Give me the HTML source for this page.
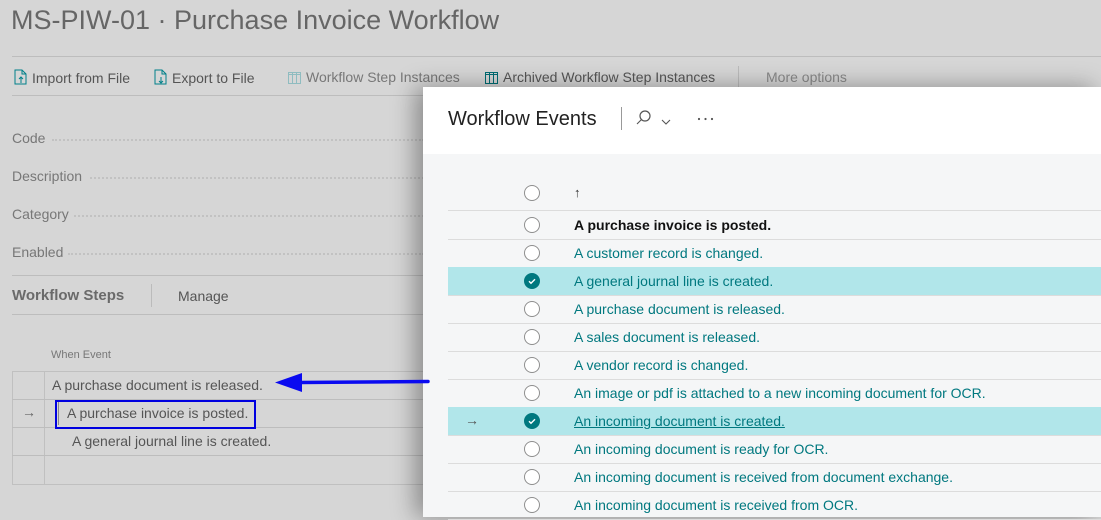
<!DOCTYPE html>
<html><head><style>
body{margin:0;width:1101px;height:517px;overflow:hidden;background:#d6d6d6;font-family:"Liberation Sans",sans-serif;position:relative;color:#5f5f5f}
.a{position:absolute;white-space:nowrap}
.hl{position:absolute;height:1px;background:#bdbdbd}
.dots{position:absolute;height:0;border-top:2px dotted #c2c2c2}
.ic{display:inline-block;vertical-align:-2px;margin-right:5px}
#dlg{position:absolute;left:423px;top:87px;width:678px;height:430px;background:#f5f6f7;box-shadow:-8px 0 22px rgba(0,0,0,.35)}
#dh{position:absolute;left:0;top:0;width:678px;height:67px;background:#fff}
.row{position:absolute;left:25px;width:653px;height:28px;border-bottom:1px solid #dcdcdc}
.row.sel{background:#b1e6ea}
.c{position:absolute;left:76px;top:6px;width:14px;height:14px;border:1.3px solid #8f8f8f;border-radius:50%;background:#fff}
.c.k{background:#00787f;border-color:#00787f}
.t{position:absolute;left:126px;top:6px;font-size:14px;color:#00787f}
</style></head><body>
<div class="a" style="left:11px;top:5px;font-size:27px;color:#666">MS-PIW-01 · Purchase Invoice Workflow</div>
<div class="hl" style="left:12px;top:56px;width:1089px"></div>
<div class="a" style="left:14px;top:69px;font-size:14px;color:#555">
<svg class="ic" width="13" height="16"><path d="M1 1h7l4 4v10H1z M8 1v4h4" fill="none" stroke="#008089"/><path d="M7 14V8M5 10l2-2 2 2" fill="none" stroke="#008089"/></svg>Import from File</div>
<div class="a" style="left:154px;top:69px;font-size:14px;color:#555">
<svg class="ic" width="13" height="16"><path d="M1 1h7l4 4v10H1z M8 1v4h4" fill="none" stroke="#008089"/><path d="M7 8v6M5 12l2 2 2-2" fill="none" stroke="#008089"/></svg>Export to File</div>
<div class="a" style="left:288px;top:69px;font-size:14px;color:#777">
<svg class="ic" width="13" height="12"><rect x="0.5" y="0.5" width="12" height="11" fill="none" stroke="#8fbcc0"/><path d="M4.5 1v10M8.5 1v10M1 2.5h11" stroke="#8fbcc0"/></svg>Workflow Step Instances</div>
<div class="a" style="left:485px;top:69px;font-size:14px;color:#555">
<svg class="ic" width="13" height="12"><rect x="0.5" y="0.5" width="12" height="11" fill="none" stroke="#006c73"/><path d="M4.5 1v10M8.5 1v10M1 2.5h11" stroke="#006c73"/></svg>Archived Workflow Step Instances</div>
<div style="position:absolute;left:738px;top:66px;width:1px;height:22px;background:#bbb"></div>
<div class="a" style="left:766px;top:69px;font-size:14px;color:#888">More options</div>
<div class="hl" style="left:12px;top:95px;width:420px"></div>
<div class="a" style="left:12px;top:130px;font-size:14px;color:#777">Code</div><div class="dots" style="left:52px;top:139px;width:372px"></div>
<div class="a" style="left:12px;top:168px;font-size:14px;color:#777">Description</div><div class="dots" style="left:90px;top:177px;width:334px"></div>
<div class="a" style="left:12px;top:206px;font-size:14px;color:#777">Category</div><div class="dots" style="left:74px;top:215px;width:350px"></div>
<div class="a" style="left:12px;top:244px;font-size:14px;color:#777">Enabled</div><div class="dots" style="left:68px;top:253px;width:356px"></div>
<div class="hl" style="left:12px;top:275px;width:420px"></div>
<div class="a" style="left:12px;top:287px;font-size:15px;font-weight:bold;color:#6a6a6a">Workflow Steps</div>
<div style="position:absolute;left:151px;top:284px;width:1px;height:23px;background:#bbb"></div>
<div class="a" style="left:178px;top:288px;font-size:14px;color:#555">Manage</div>
<div class="hl" style="left:12px;top:314px;width:420px"></div>
<div class="a" style="left:51px;top:349px;font-size:11px;color:#777">When Event</div>
<div style="position:absolute;left:12px;top:371px;width:420px;height:112px;border:1px solid #c0c0c0;border-right:none"></div>
<div style="position:absolute;left:44px;top:371px;width:1px;height:113px;background:#c0c0c0"></div>
<div class="hl" style="left:12px;top:399px;width:420px"></div>
<div class="hl" style="left:12px;top:427px;width:420px"></div>
<div class="hl" style="left:12px;top:455px;width:420px"></div>
<div class="a" style="left:52px;top:377px;font-size:14px;color:#555">A purchase document is released.</div>
<div class="a" style="left:22px;top:404px;font-size:14px;color:#666">→</div>
<div style="position:absolute;left:55px;top:400px;width:197px;height:25px;border:2px solid #0000e0"></div>
<div style="position:absolute;left:58px;top:402px;width:1px;height:23px;background:#888"></div>
<div class="a" style="left:67px;top:405px;font-size:14px;color:#555">A purchase invoice is posted.</div>
<div class="a" style="left:72px;top:433px;font-size:14px;color:#555">A general journal line is created.</div>
<div id="dlg">
<div id="dh">
<div class="a" style="left:25px;top:21px;font-size:20px;color:#222">Workflow Events</div>
<div style="position:absolute;left:198px;top:20px;width:1px;height:23px;background:#999"></div>
<svg style="position:absolute;left:212px;top:22px" width="40" height="20"><circle cx="10" cy="7" r="5" fill="none" stroke="#555" stroke-width="1.2"/><path d="M6.5 10.5L2 15M27 11l4 4 4-4" fill="none" stroke="#555" stroke-width="1.1"/></svg>
<svg style="position:absolute;left:274px;top:30px" width="18" height="4"><circle cx="2" cy="2" r="1.1" fill="#555"/><circle cx="8.5" cy="2" r="1.1" fill="#555"/><circle cx="15" cy="2" r="1.1" fill="#555"/></svg>
</div>
<div style="position:absolute;left:25px;top:90px;width:653px;height:33px;border-bottom:1px solid #dcdcdc">
<div class="c" style="top:8px"></div><div class="a" style="left:126px;top:8px;font-size:13px;color:#333">↑</div></div>
</div>
<div id="rows"></div>
<script>
var r=[["A purchase invoice is posted.",0,1],["A customer record is changed.",0],["A general journal line is created.",1],["A purchase document is released.",0],["A sales document is released.",0],["A vendor record is changed.",0],["An image or pdf is attached to a new incoming document for OCR.",0],["An incoming document is created.",1,0,1],["An incoming document is ready for OCR.",0],["An incoming document is received from document exchange.",0],["An incoming document is received from OCR.",0]];
var h="";r.forEach(function(x,i){h+='<div class="row'+(x[1]?' sel':'')+'" style="top:'+(124+i*28)+'px">'+(x[3]?'<div class="a" style="left:17px;top:5px;font-size:14px;color:#555">→</div>':'')+'<div class="c'+(x[1]?' k':'')+'">'+(x[1]?'<svg width="14" height="14" style="position:absolute;left:0;top:0"><path d="M4 7.2l2 2 4-4" fill="none" stroke="#fff" stroke-width="1.4"/></svg>':'')+'</div><div class="t" style="'+(x[2]?'font-weight:bold;color:#111;':'')+(x[3]?'text-decoration:underline;':'')+'">'+x[0]+'</div></div>';});
document.getElementById("dlg").insertAdjacentHTML("beforeend",h);
</script>
<svg style="position:absolute;left:270px;top:372px" width="162" height="22"><path d="M158 9.5L30 10.5" stroke="#0a0af0" stroke-width="3.5" stroke-linecap="round"/><path d="M5 10.5L32 1V20z" fill="#0a0af0"/></svg>
</body></html>
